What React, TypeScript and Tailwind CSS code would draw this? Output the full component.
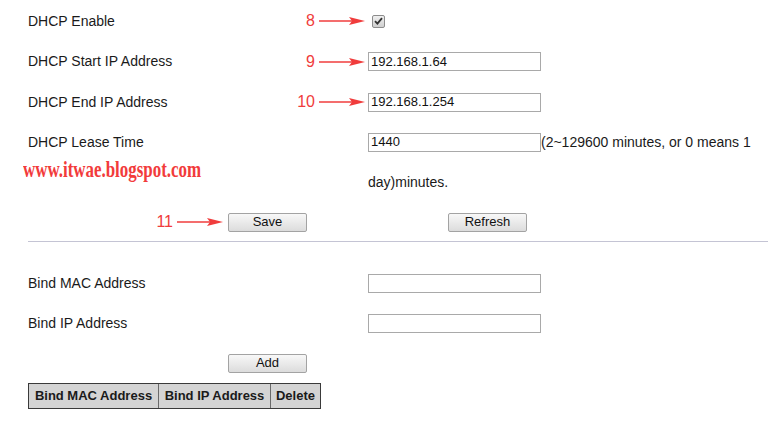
import React from "react";

function Mark({ n }: { n: string }) {
  return (
    <span className="ml-auto flex items-center gap-[4px] text-[16px] leading-none text-[#f03c3c]">
      <span>{n}</span>
      <svg width="46" height="10" viewBox="0 0 46 10">
        <line x1="0" y1="5" x2="36" y2="5" stroke="#f03c3c" strokeWidth="1.6" />
        <polygon points="30,1 46,5 30,9 33,5" fill="#f03c3c" />
      </svg>
    </span>
  );
}

function TextBox({ value = "" }: { value?: string }) {
  return (
    <div className="flex h-[19px] w-[173px] items-center border border-[#a9a9a9] bg-white px-[2px] text-[13px] text-[#111]">
      {value}
    </div>
  );
}

function Btn({ label }: { label: string }) {
  return (
    <div className="flex h-[19px] w-[79px] items-center justify-center rounded-[2px] border border-[#a3a3a3] bg-gradient-to-b from-[#f8f8f8] to-[#dcdcdc] text-[13px] text-[#111]">
      {label}
    </div>
  );
}

function Row({
  label,
  mark,
  h = "h-10",
  children,
}: {
  label?: string;
  mark?: string;
  h?: string;
  children?: React.ReactNode;
}) {
  return (
    <div className={`flex items-center ${h}`}>
      <div className="flex w-[340px] items-center pr-[3px]">
        <span>{label}</span>
        {mark && <Mark n={mark} />}
      </div>
      <div className="flex items-center">{children}</div>
    </div>
  );
}

export default function App() {
  return (
    <div
      className="relative h-[422px] w-[768px] overflow-hidden bg-white pt-[1px] text-[14px] text-[#1a1a1a]"
      style={{ fontFamily: '"Liberation Sans", Arial, sans-serif' }}
    >
      <div className="pl-[28px]">
        <Row label="DHCP Enable" mark="8">
          <span className="ml-[4px] flex h-[13px] w-[13px] items-center justify-center rounded-[2px] border border-[#8c8c8c] bg-gradient-to-b from-[#f0f0f0] to-[#cfcfcf]">
            <svg width="9" height="8" viewBox="0 0 9 8">
              <path d="M1 4.2 L3.4 6.6 L8 1.2" fill="none" stroke="#333" strokeWidth="1.8" />
            </svg>
          </span>
        </Row>
        <Row label="DHCP Start IP Address" mark="9" h="h-[41px]">
          <TextBox value="192.168.1.64" />
        </Row>
        <Row label="DHCP End IP Address" mark="10">
          <TextBox value="192.168.1.254" />
        </Row>
        <Row label="DHCP Lease Time">
          <TextBox value="1440" />
          <span>(2~129600 minutes, or 0 means 1</span>
        </Row>
        <Row h="h-[41px]">
          <span>day)minutes.</span>
        </Row>
        <div className="flex h-[38px] items-center">
          <div className="flex w-[200px] items-center pr-[5px]">
            <Mark n="11" />
          </div>
          <Btn label="Save" />
          <div className="ml-[141px]">
            <Btn label="Refresh" />
          </div>
        </div>
      </div>

      <div className="ml-[28px] border-t border-[#c4c4d4]" />

      <div className="mt-[21px] pl-[28px]">
        <Row label="Bind MAC Address">
          <TextBox />
        </Row>
        <Row label="Bind IP Address">
          <TextBox />
        </Row>
        <div className="flex h-10 items-center pl-[200px]">
          <Btn label="Add" />
        </div>
        <div className="flex h-[26px] w-[293px] border border-[#3a3a3a] bg-[#d4d4d4] text-[13px] font-bold">
          <div className="flex w-[129px] items-center justify-center">Bind MAC Address</div>
          <div className="flex w-[112px] items-center justify-center border-l border-[#6a6a6a]">
            Bind IP Address
          </div>
          <div className="flex flex-1 items-center justify-center border-l border-[#6a6a6a]">Delete</div>
        </div>
      </div>

      <div
        className="absolute left-[23px] top-[157px] origin-left scale-x-[0.705] whitespace-nowrap text-[24px] font-bold leading-[24px] text-[#f23b3b]"
        style={{ fontFamily: '"Liberation Serif", "Times New Roman", serif' }}
      >
        www.itwae.blogspot.com
      </div>
    </div>
  );
}
